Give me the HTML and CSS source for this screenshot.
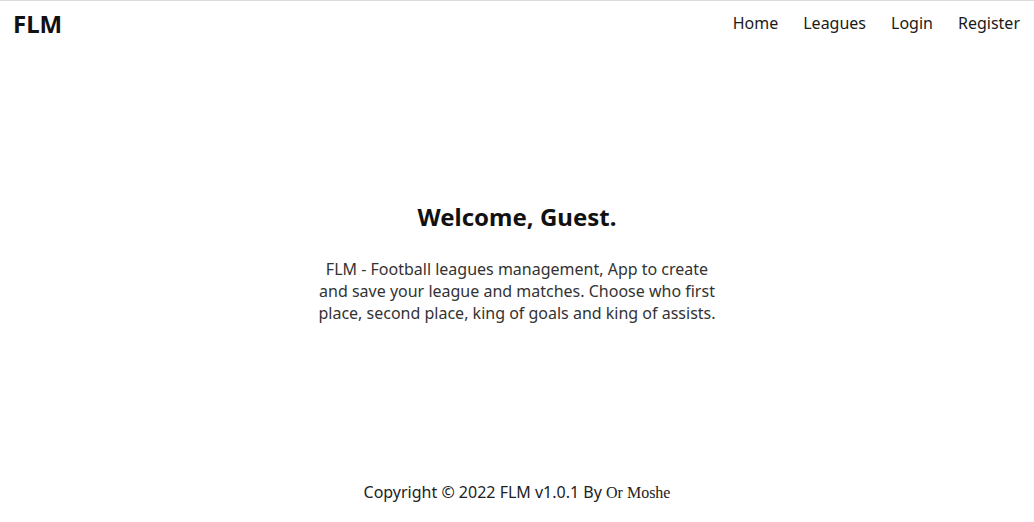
FILE: index.html
```html
<!DOCTYPE html>
<html>
<head>
<meta charset="utf-8">
<link rel="stylesheet" href="styles.css">
</head>
<body>
<div class="page">
  <header class="navbar">
    <div class="brand">FLM</div>
    <nav class="nav">
      <a class="nav-link" href="#">Home</a>
      <a class="nav-link" href="#">Leagues</a>
      <a class="nav-link" href="#">Login</a>
      <a class="nav-link" href="#">Register</a>
    </nav>
  </header>
  <main class="main">
    <h1 class="title">Welcome, Guest.</h1>
    <p class="intro">FLM - Football leagues management, App to create and save your league and matches. Choose who first place, second place, king of goals and king of assists.</p>
  </main>
  <footer class="footer">Copyright © 2022 FLM v1.0.1 By <span class="author">Or Moshe</span></footer>
</div>
</body>
</html>
```
FILE: styles.css
```css
html, body {
  margin: 0;
  padding: 0;
  background: #fff;
}
body {
  font-family: "Noto Sans", "Open Sans", sans-serif;
  color: #222;
}
.page {
  height: 100vh;
  display: flex;
  flex-direction: column;
  border-top: 1px solid #dcdcdc;
  box-sizing: border-box;
}
.navbar {
  display: flex;
  justify-content: space-between;
  align-items: center;
  height: 44px;
  padding: 0 14px 0 13px;
}
.brand {
  font-size: 24px;
  font-weight: 700;
  color: #111;
}
.nav {
  display: flex;
  gap: 25px;
}
.nav-link {
  font-size: 16px;
  color: #1a1a1a;
  text-decoration: none;
}
.main {
  flex: 1;
  display: flex;
  flex-direction: column;
  align-items: center;
  padding-top: 157px;
}
.title {
  margin: 0;
  font-size: 24px;
  font-weight: 700;
  color: #111;
  line-height: 30px;
}
.intro {
  margin: 26px 0 0 0;
  width: 410px;
  text-align: center;
  font-size: 16px;
  line-height: 22px;
  color: #333;
}
.footer {
  text-align: center;
  font-size: 16px;
  color: #222;
  padding-bottom: 18px;
  line-height: 22px;
}
.author {
  font-family: "Liberation Serif", "Times New Roman", serif;
}
```
